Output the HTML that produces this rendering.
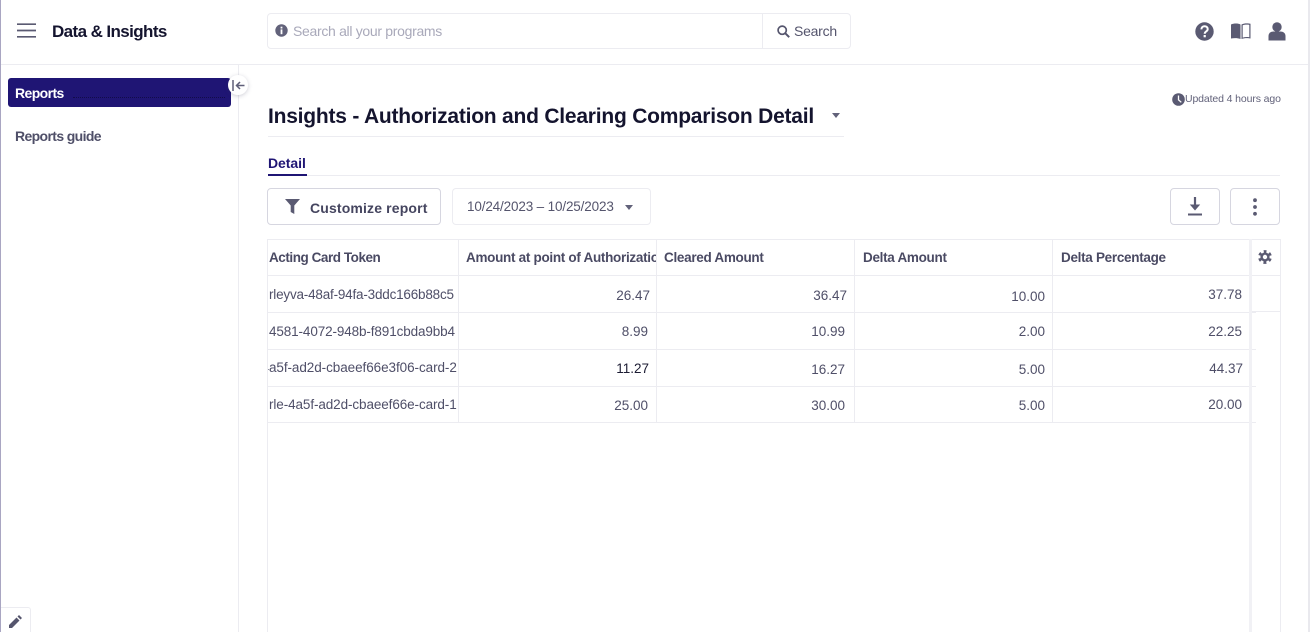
<!DOCTYPE html>
<html lang="en"><head><meta charset="utf-8"><title>Data &amp; Insights</title>
<style>
*{box-sizing:border-box}
html,body{margin:0;padding:0;background:#fff}
body{width:1310px;height:632px;position:relative;overflow:hidden;font-family:"Liberation Sans",sans-serif;color:#45455f}
.a{position:absolute}
.t{position:absolute;white-space:nowrap;line-height:20px;height:20px}
.l{position:absolute;background:#ececf1}
.box{position:absolute;background:#fff;border-radius:4px}
svg{position:absolute;display:block}
.h{font-size:13.5px;font-weight:bold;color:#4a4a63;letter-spacing:-.3px}
.c{font-size:13.5px;color:#4f4f68;letter-spacing:-.2px}
.n{font-size:13.5px;color:#4f4f68;text-align:right;width:60px}
.clip{position:absolute;overflow:hidden;height:20px;line-height:20px;white-space:nowrap}
</style></head><body>

<!-- window edges -->
<div class="l" style="left:0;top:0;width:1px;height:632px;background:#a9a6c2"></div>
<div class="l" style="left:1308px;top:0;width:2px;height:632px;background:#e9e9ee"></div>

<!-- header -->
<header>
<div class="l" style="left:1px;top:64px;width:1307px;height:1px"></div>
<svg style="left:17px;top:23px" width="19" height="15" viewBox="0 0 19 15"><path d="M0 1.2h19M0 7.5h19M0 13.8h19" stroke="#5a5a72" stroke-width="1.7"/></svg>
<div class="t" style="left:52px;top:22px;font-size:17px;font-weight:bold;color:#14142e;letter-spacing:-.6px">Data &amp; Insights</div>

<div class="box" style="left:267px;top:13px;width:584px;height:36px;border:1px solid #ececf1"></div>
<div class="l" style="left:762px;top:14px;width:1px;height:34px"></div>
<svg style="left:275px;top:24px" width="13" height="13" viewBox="0 0 13 13"><circle cx="6.5" cy="6.5" r="6.2" fill="#62627a"/><rect x="5.6" y="5.4" width="1.8" height="4.8" fill="#fff"/><rect x="5.6" y="2.7" width="1.8" height="1.8" fill="#fff"/></svg>
<div class="t" style="left:293px;top:21px;font-size:14px;color:#a9a9ba;letter-spacing:-.31px">Search all your programs</div>
<svg style="left:777px;top:25px" width="13" height="13" viewBox="0 0 13 13"><circle cx="5.2" cy="5.2" r="4.1" fill="none" stroke="#55556d" stroke-width="1.7"/><path d="M8.2 8.2l4 4" stroke="#55556d" stroke-width="2"/></svg>
<div class="t" style="left:794px;top:21px;font-size:14px;color:#55556d;letter-spacing:-.25px">Search</div>

<svg style="left:1195px;top:22px" width="19" height="19" viewBox="0 0 19 19"><circle cx="9.5" cy="9.5" r="9.2" fill="#5a5a72"/><path d="M6.4 7.4c0-4.2 6.3-4.2 6.3-.3 0 2.3-3 2.3-3 4.7" fill="none" stroke="#fff" stroke-width="2"/><rect x="8.6" y="13" width="2.2" height="2.3" fill="#fff"/></svg>
<svg style="left:1231px;top:23px" width="20" height="17" viewBox="0 0 20 17"><path d="M0 1.5C3 .2 7 .2 9.5 1.5V16C7 15 3 15 0 15.5Z" fill="#5a5a72"/><path d="M10.5 1.5C13 .2 17 .2 19.5 .8V15.5C17 15 13 15 10.5 16Z" fill="#5a5a72"/><path d="M11.7 2.3C13.5 1.6 16.5 1.5 18.3 1.9V14.2C16 13.8 13.8 14 11.7 14.6Z" fill="#fff"/></svg>
<svg style="left:1268px;top:22px" width="18" height="19" viewBox="0 0 18 19"><circle cx="9" cy="5" r="4.7" fill="#5a5a72"/><path d="M.5 18.5V14c0-3 2.5-4.5 5-4.5h7c2.5 0 5 1.5 5 4.5v4.5z" fill="#5a5a72"/></svg>
</header>

<!-- sidebar -->
<nav>
<div class="l" style="left:238px;top:65px;width:1px;height:567px"></div>
<div class="a" style="left:8px;top:78px;width:223px;height:29px;background:#1f1574;border-radius:3px"></div>
<div class="a" style="left:73px;top:97px;width:152px;height:0;border-top:1px dotted #120c4a"></div>
<div class="t" style="left:15px;top:83px;font-size:14px;font-weight:bold;color:#fff;letter-spacing:-.6px">Reports</div>
<div class="t" style="left:15px;top:126px;font-size:14px;font-weight:bold;color:#4f4f68;letter-spacing:-.63px">Reports guide</div>
<div class="a" style="left:228px;top:75px;width:20px;height:20px;border-radius:50%;background:#fff;box-shadow:0 1px 4px rgba(60,60,90,.25)"></div>
<svg style="left:232px;top:80px" width="13" height="11" viewBox="0 0 13 11"><path d="M1 0v11" stroke="#5f5f78" stroke-width="1.5"/><path d="M12.5 5.5H5M8 2L4.5 5.5 8 9" fill="none" stroke="#5f5f78" stroke-width="1.5"/></svg>
<div class="a" style="left:1px;top:607px;width:30px;height:25px;background:#fff;border:1px solid #ececf1;border-left:0;border-bottom:0;border-top-right-radius:3px"></div>
<svg style="left:9px;top:615px" width="13" height="13" viewBox="0 0 13 13"><path d="M0 13V10L7.5 2.5 10.5 5.5 3 13ZM8.5 1.5 10 0 13 3 11.5 4.5Z" fill="#55556d"/></svg>
</nav>

<!-- main heading -->
<main>
<svg style="left:1172px;top:93px" width="13" height="13" viewBox="0 0 13 13"><circle cx="6.5" cy="6.5" r="6.3" fill="#5a5a72"/><path d="M6.5 2.5v4.3l2.8 2.5" fill="none" stroke="#fff" stroke-width="1.3"/></svg>
<div class="t" style="left:1185px;top:89px;font-size:10.5px;color:#62627a;letter-spacing:-.12px">Updated 4 hours ago</div>
<div class="t" style="left:268px;top:104px;height:26px;line-height:26px;font-size:21px;font-weight:bold;color:#14142e;letter-spacing:-.22px">Insights - Authorization and Clearing Comparison Detail</div>
<svg style="left:832px;top:113px" width="8" height="5" viewBox="0 0 8 5"><path d="M0 0h8L4 5z" fill="#62627a"/></svg>
<div class="l" style="left:268px;top:136px;width:576px;height:1px"></div>

<div class="t" style="left:268px;top:153px;font-size:14px;font-weight:bold;color:#1f1574;letter-spacing:-.05px">Detail</div>
<div class="l" style="left:268px;top:175px;width:1012px;height:1px"></div>
<div class="a" style="left:268px;top:174px;width:39px;height:2px;background:#1f1574"></div>

<!-- toolbar -->
<div class="box" style="left:267px;top:188px;width:174px;height:37px;border:1px solid #d6d6e0"></div>
<svg style="left:285px;top:199px" width="15" height="15" viewBox="0 0 15 15"><path d="M0 0h15L9.3 6.5V15L5.7 13V6.5Z" fill="#5a5a72"/></svg>
<div class="t" style="left:310px;top:198px;font-size:14px;font-weight:bold;color:#45455f;letter-spacing:.15px">Customize report</div>
<div class="box" style="left:452px;top:188px;width:199px;height:37px;border:1px solid #ececf1"></div>
<div class="t" style="left:467px;top:197px;font-size:13.5px;color:#55556d;letter-spacing:-.15px">10/24/2023 – 10/25/2023</div>
<svg style="left:625px;top:205px" width="8" height="5" viewBox="0 0 8 5"><path d="M0 0h8L4 5z" fill="#62627a"/></svg>
<div class="box" style="left:1170px;top:188px;width:50px;height:37px;border:1px solid #d6d6e0"></div>
<svg style="left:1188px;top:197px" width="14" height="19" viewBox="0 0 14 19"><path d="M7 0v11" stroke="#5a5a72" stroke-width="2.2"/><path d="M1.8 7.5h10.4L7 13.5z" fill="#5a5a72"/><path d="M0 17.5h14" stroke="#5a5a72" stroke-width="2"/></svg>
<div class="box" style="left:1230px;top:188px;width:50px;height:37px;border:1px solid #d6d6e0"></div>
<svg style="left:1253px;top:198px" width="4" height="18" viewBox="0 0 4 18"><circle cx="2" cy="2.2" r="1.9" fill="#5a5a72"/><circle cx="2" cy="9" r="1.9" fill="#5a5a72"/><circle cx="2" cy="15.8" r="1.9" fill="#5a5a72"/></svg>

<!-- table frame -->
<div class="l" style="left:267px;top:239px;width:1px;height:393px"></div>
<div class="l" style="left:268px;top:239px;width:1012px;height:1px"></div>
<div class="l" style="left:268px;top:275px;width:1012px;height:1px"></div>
<div class="l" style="left:268px;top:312px;width:988px;height:1px"></div>
<div class="l" style="left:1252px;top:311px;width:28px;height:1px"></div>
<div class="l" style="left:268px;top:349px;width:988px;height:1px"></div>
<div class="l" style="left:268px;top:386px;width:988px;height:1px"></div>
<div class="l" style="left:268px;top:422px;width:988px;height:1px"></div>
<div class="l" style="left:458px;top:239px;width:1px;height:184px"></div>
<div class="l" style="left:656px;top:239px;width:1px;height:184px"></div>
<div class="l" style="left:854px;top:239px;width:1px;height:184px"></div>
<div class="l" style="left:1052px;top:239px;width:1px;height:184px"></div>
<div class="l" style="left:1249px;top:239px;width:3px;height:393px;background:#f1f1f5"></div>
<div class="l" style="left:1280px;top:239px;width:1px;height:393px"></div>

<!-- table header -->
<div class="clip h" style="left:269px;top:248px;width:189px;letter-spacing:-.45px">Acting Card Token</div>
<div class="clip h" style="left:466px;top:248px;width:190px">Amount at point of Authorization</div>
<div class="t h" style="left:664px;top:248px">Cleared Amount</div>
<div class="t h" style="left:863px;top:248px">Delta Amount</div>
<div class="t h" style="left:1061px;top:248px">Delta Percentage</div>
<svg style="left:1258px;top:250px" width="14" height="14" viewBox="0 0 14 14"><circle cx="7" cy="7" r="3.4" fill="none" stroke="#5a5a72" stroke-width="2.4"/><circle cx="7" cy="7" r="5.6" fill="none" stroke="#5a5a72" stroke-width="2.6" stroke-dasharray="2.9 2.96" stroke-dashoffset="1.45" transform="rotate(-90 7 7)"/></svg>

<!-- row 1 -->
<div class="clip c" style="left:269px;top:285px;width:188px">rleyva-48af-94fa-3ddc166b88c5</div>
<div class="t n" style="left:590px;top:286px">26.47</div>
<div class="t n" style="left:787px;top:286px">36.47</div>
<div class="t n" style="left:985px;top:287px">10.00</div>
<div class="t n" style="left:1182px;top:285px">37.78</div>
<!-- row 2 -->
<div class="clip c" style="left:269px;top:322px;width:188px;letter-spacing:-.12px">4581-4072-948b-f891cbda9bb4</div>
<div class="t n" style="left:588px;top:322px">8.99</div>
<div class="t n" style="left:785px;top:322px">10.99</div>
<div class="t n" style="left:985px;top:322px">2.00</div>
<div class="t n" style="left:1182px;top:322px">22.25</div>
<!-- row 3 -->
<div class="clip c" style="left:268px;top:358px;width:189px;letter-spacing:-.07px;text-indent:-6.5px">4a5f-ad2d-cbaeef66e3f06-card-2</div>
<div class="t n" style="left:589px;top:359px;color:#1c1c33">11.27</div>
<div class="t n" style="left:785px;top:360px">16.27</div>
<div class="t n" style="left:985px;top:360px">5.00</div>
<div class="t n" style="left:1183px;top:359px">44.37</div>
<!-- row 4 -->
<div class="clip c" style="left:269px;top:395px;width:188px;letter-spacing:-.1px">rle-4a5f-ad2d-cbaeef66e-card-1</div>
<div class="t n" style="left:588px;top:396px">25.00</div>
<div class="t n" style="left:785px;top:396px">30.00</div>
<div class="t n" style="left:985px;top:396px">5.00</div>
<div class="t n" style="left:1182px;top:395px">20.00</div>
</main>
</body></html>
